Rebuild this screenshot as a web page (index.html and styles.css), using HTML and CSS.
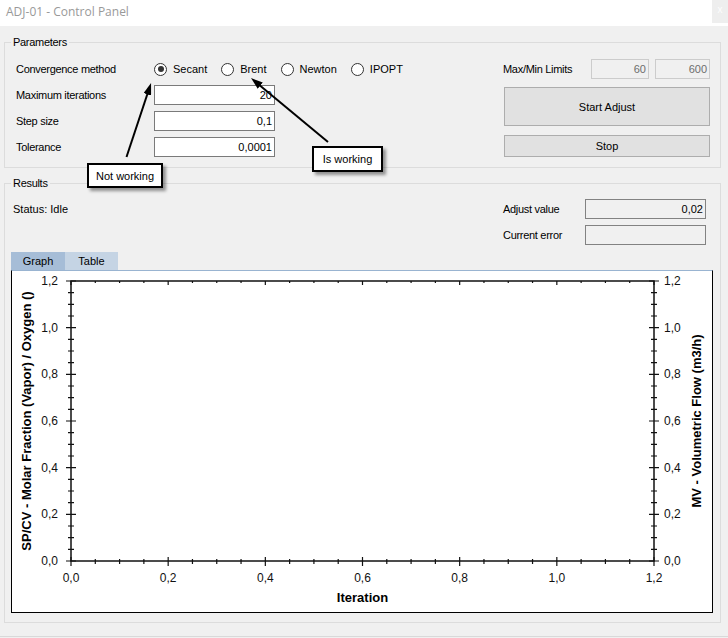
FILE: index.html
```html
<!doctype html>
<html>
<head>
	<title>ADJ-01 - Control Panel</title>
	<meta charset="utf-8">
	<link rel="stylesheet" href="styles.css">
</head>
<body>
	<div class="window">
		<header class="titlebar">
			<span class="title">ADJ-01 - Control Panel</span>
			<span class="close">x</span>
		</header>
		<main class="content">
			<fieldset class="group params">
				<legend>Parameters</legend>
				<div class="params-body">
					<div class="params-left">
						<div class="form-row">
							<span class="lbl">Convergence method</span>
							<div class="radios">
								<span class="radio checked"><span class="radio-mark"></span>Secant</span>
								<span class="radio"><span class="radio-mark"></span>Brent</span>
								<span class="radio"><span class="radio-mark"></span>Newton</span>
								<span class="radio"><span class="radio-mark"></span>IPOPT</span>
							</div>
						</div>
						<div class="form-row">
							<span class="lbl">Maximum iterations</span>
							<div class="textbox">20</div>
						</div>
						<div class="form-row">
							<span class="lbl">Step size</span>
							<div class="textbox">0,1</div>
						</div>
						<div class="form-row">
							<span class="lbl">Tolerance</span>
							<div class="textbox">0,0001</div>
						</div>
					</div>
					<div class="params-right">
						<div class="form-row limits">
							<span class="lbl">Max/Min Limits</span>
							<div class="textbox disabled min">60</div>
							<div class="textbox disabled max">600</div>
						</div>
						<button class="btn start">Start Adjust</button>
						<button class="btn stop">Stop</button>
					</div>
				</div>
			</fieldset>

			<fieldset class="group results">
				<legend>Results</legend>
				<div class="results-body">
					<div class="results-top">
						<div class="status">Status: Idle</div>
						<div class="readouts">
							<div class="form-row">
								<span class="lbl">Adjust value</span>
								<div class="readout">0,02</div>
							</div>
							<div class="form-row">
								<span class="lbl">Current error</span>
								<div class="readout"></div>
							</div>
						</div>
					</div>
					<div class="tabs">
						<span class="tab active">Graph</span>
						<span class="tab">Table</span>
					</div>
					<div class="chart-panel">
						<svg id="chart" width="700" height="341">
							<rect class="axes" x="59" y="10" width="583" height="280"/>
							<path id="ticks" class="ticks" d=""/>
							<text class="axis-title" x="350.5" y="331" text-anchor="middle">Iteration</text>
							<text class="axis-title" transform="translate(19 150) rotate(-90)" text-anchor="middle">SP/CV - Molar Fraction (Vapor) / Oxygen ()</text>
							<text class="axis-title" transform="translate(689 150) rotate(-90)" text-anchor="middle">MV - Volumetric Flow (m3/h)</text>
						</svg>
					</div>
				</div>
			</fieldset>
		</main>
		<footer class="statusbar"></footer>

		<div class="callout not-working">Not working</div>
		<div class="callout is-working">Is working</div>
		<svg class="arrows" width="728" height="638">
			<defs>
				<marker id="head" markerWidth="12" markerHeight="8" refX="2" refY="4" orient="auto" markerUnits="userSpaceOnUse">
					<path d="M0 0L12 4L0 8z" fill="#000"/>
				</marker>
			</defs>
			<line x1="126.5" y1="157" x2="147.9" y2="92.5" marker-end="url(#head)"/>
			<line x1="328" y1="142" x2="258.7" y2="84.4" marker-end="url(#head)"/>
		</svg>
	</div>

	<script>
		const svgNS = 'http://www.w3.org/2000/svg';
		const plot = { left: 59, right: 642, top: 10, bottom: 290 };

		function addText(svg, x, y, text, anchor) {
			const el = document.createElementNS(svgNS, 'text');
			el.setAttribute('x', x);
			el.setAttribute('y', y);
			el.setAttribute('class', 'tick-label');
			el.setAttribute('text-anchor', anchor);
			el.textContent = text;
			svg.appendChild(el);
		}

		function drawChart() {
			const svg = document.getElementById('chart');
			const xStep = (plot.right - plot.left) / 24;
			const yStep = (plot.bottom - plot.top) / 24;
			let d = '';
			for (let i = 0; i <= 24; i++) {
				const major = i % 4 == 0;
				const x = plot.left + i * xStep;
				const y = plot.bottom - i * yStep;
				const len = major ? 5 : 3;
				d += `M${x} ${plot.bottom - len + 1}V${plot.bottom + len}`;
				d += `M${x} ${plot.top}V${plot.top + len - 1}`;
				d += `M${plot.left - len} ${y}H${plot.left + len}`;
				d += `M${plot.right - len} ${y}H${plot.right + len}`;
				if (major) {
					const label = (i * 0.05).toFixed(1).replace('.', ',');
					addText(svg, x, plot.bottom + 21, label, 'middle');
					addText(svg, plot.left - 13, y + 4, label, 'end');
					addText(svg, plot.right + 10, y + 4, label, 'start');
				}
			}
			document.getElementById('ticks').setAttribute('d', d);
		}

		drawChart();
	</script>
</body>
</html>
```

FILE: styles.css
```css
* {
	box-sizing: border-box;
}
html, body {
	margin: 0;
	height: 100%;
}
body {
	background: #f0f0f0;
	font-family: 'Liberation Sans', Arial, sans-serif;
	font-size: 11px;
	color: #000;
}
.window {
	position: relative;
	width: 728px;
	height: 638px;
	overflow: hidden;
	display: flex;
	flex-direction: column;
}

/* title bar */
.titlebar {
	height: 26px;
	flex: none;
	background: white;
	display: flex;
	justify-content: space-between;
	align-items: flex-start;
}
.title {
	font-family: 'Open Sans', sans-serif;
	font-size: 12px;
	line-height: 24px;
	color: #999;
	padding-left: 6px;
}
.close {
	width: 16px;
	height: 23px;
	background: #eeeeee;
	color: #fdfdfd;
	font-size: 10px;
	line-height: 20px;
	text-align: center;
}

/* group boxes */
.content {
	padding: 0 7px 0 4px;
}
.group {
	margin: 0;
	padding: 0;
	min-width: 0;
	border: 1px solid #dcdcdc;
}
.group legend {
	margin-left: 6px;
	padding: 0 2px;
	line-height: 14px;
	letter-spacing: -0.3px;
}
.params {
	margin-top: 9px;
}
.results {
	margin-top: 8px;
}
.lbl {
	letter-spacing: -0.3px;
	white-space: nowrap;
}

/* parameters */
.params-body {
	display: flex;
	justify-content: space-between;
	padding: 7px 10px 7px 11px;
}
.form-row {
	display: flex;
	align-items: center;
	height: 26px;
}
.params-left .lbl {
	width: 138px;
}
.textbox {
	width: 121px;
	height: 20px;
	border: 1px solid #7a7a7a;
	background: white;
	text-align: right;
	padding: 0 2px;
	line-height: 18px;
}
.textbox.disabled {
	background: #f0f0f0;
	border-color: #cccccc;
	color: #6d6d6d;
}
.radios {
	display: flex;
	gap: 14px;
}
.radio {
	display: flex;
	align-items: center;
	gap: 6px;
}
.radio-mark {
	width: 13px;
	height: 13px;
	border: 1px solid #333;
	border-radius: 50%;
	background: white;
	display: flex;
	align-items: center;
	justify-content: center;
}
.radio.checked .radio-mark::after {
	content: '';
	width: 6px;
	height: 6px;
	border-radius: 50%;
	background: #333;
}

.params-right {
	width: 207px;
}
.limits .lbl {
	width: 88px;
}
.limits .min {
	width: 58px;
	margin-right: 6px;
}
.limits .max {
	width: 55px;
}
.btn {
	display: block;
	width: 206px;
	margin-left: 1px;
	border: 1px solid #adadad;
	background: #e1e1e1;
	font: inherit;
	color: #000;
	padding: 0;
}
.btn.start {
	height: 39px;
	margin-top: 5px;
}
.btn.stop {
	height: 22px;
	margin-top: 9px;
}

/* results */
.results-body {
	padding: 6px 7px 9px 6px;
}
.results-top {
	display: flex;
	justify-content: space-between;
}
.status {
	padding-left: 2px;
	line-height: 26px;
}
.readouts {
	margin-right: 7px;
}
.readouts .lbl {
	width: 82px;
}
.readout {
	width: 121px;
	height: 20px;
	border: 1px solid #828282;
	background: #f0f0f0;
	text-align: right;
	padding: 0 2px;
	line-height: 18px;
}

.tabs {
	display: flex;
	margin-top: 4px;
}
.tab {
	width: 54px;
	line-height: 18px;
	text-align: center;
	background: #c5d4e4;
}
.tab + .tab {
	width: 53px;
}
.tab.active {
	background: #a6bdd7;
}
.chart-panel {
	height: 343px;
	background: white;
	border: 1px solid #000;
	border-top-color: #99b4d1;
}
#chart {
	display: block;
}
.axes {
	fill: none;
	stroke: #111;
	stroke-width: 1.5;
}
.ticks {
	stroke: #111;
	stroke-width: 1.2;
}
.tick-label {
	font-family: 'Liberation Sans', Arial, sans-serif;
	font-size: 12px;
	fill: #111;
}
.axis-title {
	font-family: 'Liberation Sans', Arial, sans-serif;
	font-size: 13px;
	font-weight: bold;
	fill: #000;
}

.statusbar {
	margin-top: 13px;
	border-top: 1px solid #d9d9d9;
}

/* annotations drawn over the window */
.callout {
	position: absolute;
	background: white;
	border: 2px solid #000;
	box-shadow: 3px 3px 3px rgba(0, 0, 0, 0.4);
	display: flex;
	align-items: center;
	justify-content: center;
}
.not-working {
	left: 87px;
	top: 163px;
	width: 76px;
	height: 25px;
}
.is-working {
	left: 312px;
	top: 146px;
	width: 71px;
	height: 26px;
}
.arrows {
	position: absolute;
	left: 0;
	top: 0;
	pointer-events: none;
}
.arrows line {
	stroke: #000;
	stroke-width: 2;
}
```
